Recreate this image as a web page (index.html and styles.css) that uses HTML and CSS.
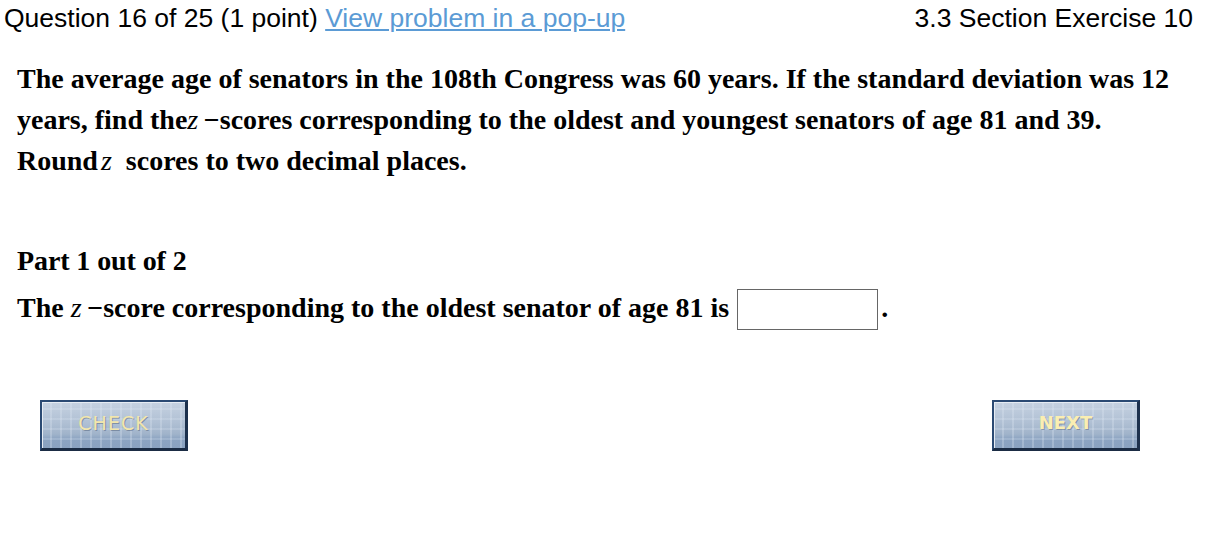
FILE: index.html
```html
<!DOCTYPE html>
<html>
<head>
<meta charset="utf-8">
<link rel="stylesheet" href="styles.css">
</head>
<body>
<div class="page">
  <div class="header">
    <div class="qinfo">Question 16 of 25 (1 point) <a class="popup" href="#">View problem in a pop-up</a></div>
    <div class="section">3.3 Section Exercise 10</div>
  </div>
  <div class="problem">
    <p class="stmt">The average age of senators in the 108th Congress was 60 years. If the standard deviation was 12 years, find the<i class="z">z</i>&#8201;−scores corresponding to the oldest and youngest senators of age 81 and 39. Round<i class="z zr">z</i>&nbsp; scores to two decimal places.</p>
  </div>
  <div class="part">
    <div class="part-title">Part 1 out of 2</div>
    <div class="part-q">The <i class="z">z</i>&#8201;−score corresponding to the oldest senator of age 81 is <span class="answer"></span><span class="dot">.</span></div>
  </div>
  <div class="buttons">
    <button class="btn check">CHECK</button>
    <button class="btn next">NEXT</button>
  </div>
</div>
</body>
</html>
```
FILE: styles.css
```css
html, body { margin: 0; padding: 0; background: #fff; }
.page { width: 1214px; height: 550px; }
.header {
  display: flex; justify-content: space-between; align-items: baseline;
  padding: 3px 21px 0 4px;
  font-family: "Liberation Sans", Arial, sans-serif;
  font-size: 26.5px; line-height: 31px; color: #000; height: 31px;
}
.popup { color: #5b9bd5; text-decoration: underline; text-underline-offset: 2px; }
.problem { padding: 24px 0 0 17px; }
.stmt {
  margin: 0; width: 1163px;
  font-family: "Liberation Serif", "Times New Roman", serif;
  font-weight: bold; font-size: 28px; line-height: 41px; color: #000;
}
.z { font-weight: normal; font-style: italic; font-family: "Liberation Serif", serif; letter-spacing: 0; }
.zr { margin-left: 3px; }
.part {
  padding: 60px 0 0 17px;
  font-family: "Liberation Serif", "Times New Roman", serif;
  font-weight: bold; font-size: 28px; color: #000;
}
.part-title { line-height: 40px; letter-spacing: -0.1px; }
.part-q { line-height: 40px; margin-top: 7px; white-space: nowrap; }
.answer {
  display: inline-block; width: 139px; height: 39px;
  border: 1px solid #666; vertical-align: -13px; margin-left: 1px;
}
.dot { margin-left: 3px; }
.buttons { display: flex; justify-content: space-between; padding: 70px 0 0 40px; width: 1100px; }
.btn {
  width: 148px; height: 51px; box-sizing: border-box;
  border: 2px solid #2b4a73; border-right: 3px solid #1d314d; border-bottom: 3px solid #1b2c44;
  background:
    repeating-linear-gradient(90deg, transparent 0 8px, rgba(225,234,245,0.28) 8px 10px),
    repeating-linear-gradient(0deg, transparent 0 8px, rgba(225,234,245,0.22) 8px 10px),
    linear-gradient(#c6d2e1 0%, #b0c0d4 45%, #a0b3ca 70%, #8ca4c2 80%, #8aa2c0 100%);
  font-family: "DejaVu Sans", Verdana, sans-serif; font-size: 19px;
  color: #f2e6ac; padding: 0 0 5px 0; letter-spacing: 1px;
  box-shadow: inset 1px 1px 0 #e6ecf3;
  text-shadow: 1px 1px 0 rgba(70,85,110,0.45);
}
.next { font-weight: bold; color: #faeeb2; letter-spacing: 0; font-size: 18px; }
```
